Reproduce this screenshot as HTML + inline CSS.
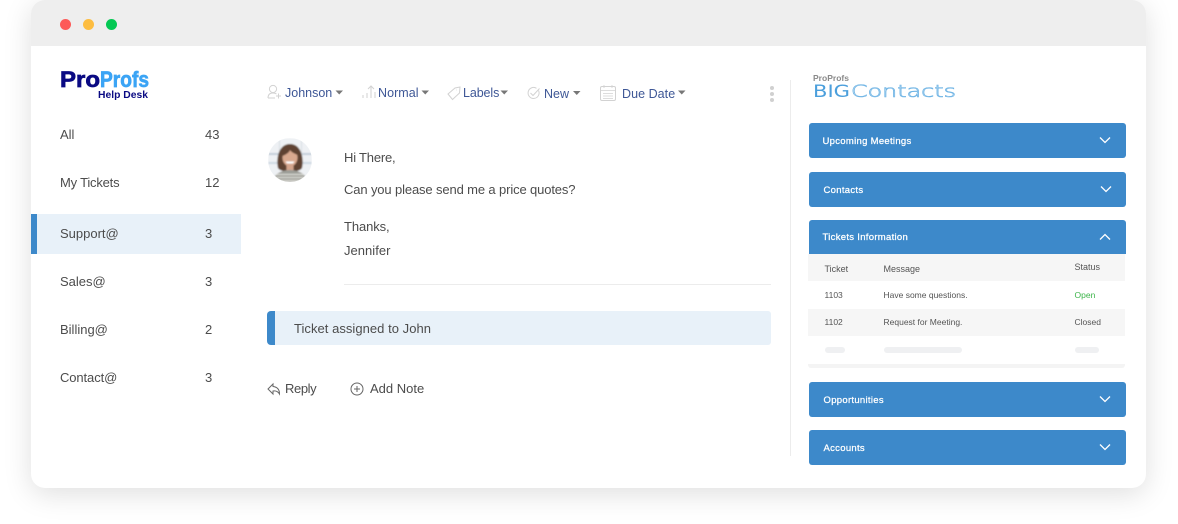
<!DOCTYPE html>
<html><head><meta charset="utf-8">
<style>
html,body{margin:0;padding:0;background:#fff}
body{position:relative;width:1178px;height:524px;overflow:hidden;font-family:"Liberation Sans",sans-serif;color:#4a4a4a}
.a{position:absolute;white-space:nowrap}
.t{font-size:13px;line-height:16px;color:#4c4c4c}
.b{color:#3e5796;font-size:12.5px;line-height:16px}
.bar{position:absolute;left:808.5px;width:317px;height:35px;background:#3d89ca;border-radius:3px;color:#fff;font-size:9.5px;line-height:37px;letter-spacing:.3px;-webkit-text-stroke:.25px #fff}
.bar span{position:absolute;left:14px;top:0;white-space:nowrap}
.bar svg{position:absolute;left:290px;top:13px}
.s{font-size:8.5px;line-height:12px;color:#555}
.ph{position:absolute;height:6px;background:#eff0f2;border-radius:3px;top:347px}
</style></head>
<body>
<div class="a" style="left:31px;top:0;width:1115px;height:488px;border-radius:14px;background:#fff;box-shadow:0 6px 28px rgba(0,0,0,.13)"></div>
<div class="a" style="left:31px;top:0;width:1115px;height:46px;border-radius:14px 14px 0 0;background:#eee"></div>
<div class="a" style="left:60px;top:19px;width:11px;height:11px;border-radius:50%;background:#fd5a58"></div>
<div class="a" style="left:83px;top:19px;width:11px;height:11px;border-radius:50%;background:#fdbd41"></div>
<div class="a" style="left:106px;top:19px;width:11px;height:11px;border-radius:50%;background:#04c853"></div>

<!-- logo -->
<svg class="a" style="left:58px;top:66px" width="100" height="36">
<text x="2" y="21" font-family="Liberation Sans" font-weight="bold" font-size="22" fill="#0a0a83" textLength="40" lengthAdjust="spacingAndGlyphs" stroke="#0a0a83" stroke-width=".7">Pro</text>
<text x="42" y="21" font-family="Liberation Sans" font-weight="bold" font-size="22" fill="#3ba4f5" textLength="49" lengthAdjust="spacingAndGlyphs" stroke="#3ba4f5" stroke-width=".7">Profs</text>
<text x="40" y="32" font-family="Liberation Sans" font-weight="bold" font-size="10.500" fill="#0a0a83" textLength="50" lengthAdjust="spacingAndGlyphs">Help Desk</text>
</svg>

<!-- sidebar -->
<div class="a" style="left:31px;top:214px;width:210px;height:40px;background:#e8f1f9"></div>
<div class="a" style="left:31px;top:214px;width:6px;height:40px;background:#3d89ca"></div>
<div class="a t" style="left:60px;top:127px">All</div><div class="a t" style="left:205px;top:127px">43</div>
<div class="a t" style="left:60px;top:175px;letter-spacing:-.2px">My Tickets</div><div class="a t" style="left:205px;top:175px">12</div>
<div class="a t" style="left:60px;top:226px">Support@</div><div class="a t" style="left:205px;top:226px">3</div>
<div class="a t" style="left:60px;top:274px">Sales@</div><div class="a t" style="left:205px;top:274px">3</div>
<div class="a t" style="left:60px;top:322px">Billing@</div><div class="a t" style="left:205px;top:322px">2</div>
<div class="a t" style="left:60px;top:370px;letter-spacing:-.1px">Contact@</div><div class="a t" style="left:205px;top:370px">3</div>

<!-- toolbar -->
<svg class="a" style="left:266px;top:84px" width="530" height="20" fill="none" stroke="#d2d2d2" stroke-width="1">
<circle cx="7" cy="5" r="3.600"/><path d="M2 14c0-3.500 2-5 5-5 1.500 0 2.500.3 3.500 1M2 14h7M10 12h5M12.500 9.500v5"/>
<path d="M97 14v-3M101 14V9M105 14V2M102 5l3-3 3 3M109 14V8"/>
<path d="M182 10l7-6 5-1-.5 6-7 6.500zM190 6h.5"/>
<g transform="translate(0 1)"><path d="M272.500 5.500a5.500 5.500 0 1 1-2-2.200"/><path d="M264.500 8l2.500 2.500 6.500-7"/></g>
<rect x="334.500" y="2.500" width="15" height="14" rx="1.500"/><path d="M334.500 6.500h15M338 1v3M346 1v3M337 9.500h10M337 12h10M337 14.500h10" stroke-width=".8"/>
</svg>
<div class="a b" style="left:285px;top:85px">Johnson</div>
<div class="a b" style="left:378px;top:85px;letter-spacing:.05px">Normal</div>
<div class="a b" style="left:463px;top:85px;letter-spacing:-.1px">Labels</div>
<div class="a b" style="left:544px;top:86px">New</div>
<div class="a b" style="left:622px;top:86px;letter-spacing:.05px">Due Date</div>
<svg class="a" style="left:330px;top:85px" width="360" height="16" fill="#777">
<path d="M5.500 5.500h7.500l-3.750 4zM91.500 5.500h7.500l-3.750 4zM170.500 5.500h7.500l-3.750 4zM243 6h7.500l-3.750 4zM348 5.500h7.500l-3.750 4z"/>
</svg>
<div class="a" style="left:770px;top:86px;width:4px;height:4px;border-radius:50%;background:#d0d0d0;box-shadow:0 6px 0 #d0d0d0,0 12px 0 #d0d0d0"></div>
<div class="a" style="left:790px;top:80px;width:1px;height:376px;background:#ececec"></div>

<!-- avatar -->
<svg class="a" style="left:268px;top:138px" width="44" height="44">
<defs><clipPath id="c"><circle cx="22" cy="22" r="22"/></clipPath>
<filter id="f"><feGaussianBlur stdDeviation=".7"/></filter></defs>
<g clip-path="url(#c)">
<g filter="url(#f)">
<rect width="44" height="44" fill="#eef1f4"/>
<rect y="15" width="44" height="2" fill="#c3ced9"/><rect y="24" width="44" height="2" fill="#cdd8e2"/>
<rect x="11" y="0" width="1" height="30" fill="#d7dde2"/><rect x="33" y="0" width="1" height="30" fill="#d7dde2"/>
<path d="M10 30c-2-8 0-24 12-24s14 16 12 24c-1 2-5 3-6 3H16c-1 0-5-1-6-3z" fill="#5f4230"/>
<ellipse cx="22" cy="19.500" rx="7.500" ry="9" fill="#d9a98f"/>
<path d="M14 18c1-7 5-8 8-8s7 3 8 7c-3-1-7-3-8-5-1 3-5 5-8 6z" fill="#5f4230"/>
<rect x="18.500" y="25" width="7" height="8" fill="#d3a48c"/>
<path d="M17.500 23.500h9l-1.500 2h-6z" fill="#fff"/>
<path d="M5 44c0-8 9-12 17-12s17 4 17 12z" fill="#9c9d97"/>
<path d="M8 36.500h28M6 39.500h32M5 42.500h34" stroke="#dedfd9" stroke-width="1.300"/>
</g></g></svg>

<!-- message -->
<div class="a t" style="left:344px;top:150px;letter-spacing:-.2px">Hi There,</div>
<div class="a t" style="left:344px;top:182px;letter-spacing:-.13px">Can you please send me a price quotes?</div>
<div class="a t" style="left:344px;top:219px;letter-spacing:-.1px">Thanks,</div>
<div class="a t" style="left:344px;top:243px;letter-spacing:.03px">Jennifer</div>
<div class="a" style="left:344px;top:284px;width:427px;height:1px;background:#ececec"></div>

<div class="a" style="left:267px;top:311px;width:504px;height:34px;background:#e8f1f9;border-radius:3px"></div>
<div class="a" style="left:267px;top:311px;width:8px;height:34px;background:#3d89ca;border-radius:4px 0 0 4px"></div>
<div class="a t" style="left:294px;top:321px;letter-spacing:.04px">Ticket assigned to John</div>

<svg class="a" style="left:266px;top:380px" width="100" height="18" fill="none" stroke="#666" stroke-width="1">
<path d="M7 4L2 9l5 5v-3c3-.5 5 .5 6.500 3 0-4-2-7-6.500-7.500z"/>
<circle cx="91" cy="9" r="6"/><path d="M88 9h6M91 6v6"/>
</svg>
<div class="a t" style="left:285px;top:381px;letter-spacing:-.4px">Reply</div>
<div class="a t" style="left:370px;top:381px">Add Note</div>

<!-- right logo -->
<svg class="a" style="left:810px;top:70px" width="150" height="32">
<text x="3" y="11" font-family="Liberation Sans" font-weight="bold" font-size="8.500" fill="#8a8a8a" textLength="36" lengthAdjust="spacingAndGlyphs">ProProfs</text>
<text x="3" y="27" font-family="DejaVu Sans" font-size="17" fill="#4b9fdc" textLength="37" lengthAdjust="spacingAndGlyphs">BIG</text>
<text x="41" y="27" font-family="DejaVu Sans" font-weight="200" font-size="17" fill="none" stroke="#6db3e4" stroke-width=".6" textLength="105" lengthAdjust="spacingAndGlyphs">Contacts</text>
</svg>

<!-- right panel -->
<div class="bar" style="top:123px"><span>Upcoming Meetings</span><svg width="12" height="8" fill="none" stroke="#fff" stroke-width="1.300"><path d="M1 1.500l5 5 5-5"/></svg></div>
<div class="bar" style="top:172px"><span style="left:15px">Contacts</span><svg style="left:291px" width="12" height="8" fill="none" stroke="#fff" stroke-width="1.300"><path d="M1 1.500l5 5 5-5"/></svg></div>
<div class="bar" style="top:220px;height:34px;line-height:35px;border-radius:3px 3px 0 0"><span>Tickets Information</span><svg width="12" height="8" fill="none" stroke="#fff" stroke-width="1.300"><path d="M1 6.500l5-5 5 5"/></svg></div>
<div class="a" style="left:808px;top:254px;width:317px;height:27px;background:#f6f6f6"></div>
<div class="a" style="left:808px;top:309px;width:317px;height:27px;background:#f6f6f6"></div>
<div class="a" style="left:808px;top:364px;width:317px;height:4px;background:#f4f4f4;border-radius:0 0 3px 3px"></div>
<div class="a s" style="left:824.500px;top:263px;font-size:9px">Ticket</div>
<div class="a s" style="left:883.500px;top:263px;font-size:9px">Message</div>
<div class="a s" style="left:1074.500px;top:261px;font-size:9px">Status</div>
<div class="a s" style="left:824.500px;top:289px">1103</div>
<div class="a s" style="left:883.500px;top:289px">Have some questions.</div>
<div class="a s" style="left:1074.500px;top:289px;color:#3cb54a">Open</div>
<div class="a s" style="left:824.500px;top:316px">1102</div>
<div class="a s" style="left:883.500px;top:316px">Request for Meeting.</div>
<div class="a s" style="left:1074.500px;top:316px">Closed</div>
<div class="ph" style="left:825px;width:20px"></div>
<div class="ph" style="left:884px;width:78px"></div>
<div class="ph" style="left:1075px;width:24px"></div>
<div class="bar" style="top:382px"><span style="left:15px">Opportunities</span><svg width="12" height="8" fill="none" stroke="#fff" stroke-width="1.300"><path d="M1 1.500l5 5 5-5"/></svg></div>
<div class="bar" style="top:430px"><span style="left:15px">Accounts</span><svg width="12" height="8" fill="none" stroke="#fff" stroke-width="1.300"><path d="M1 1.500l5 5 5-5"/></svg></div>
</body></html>
